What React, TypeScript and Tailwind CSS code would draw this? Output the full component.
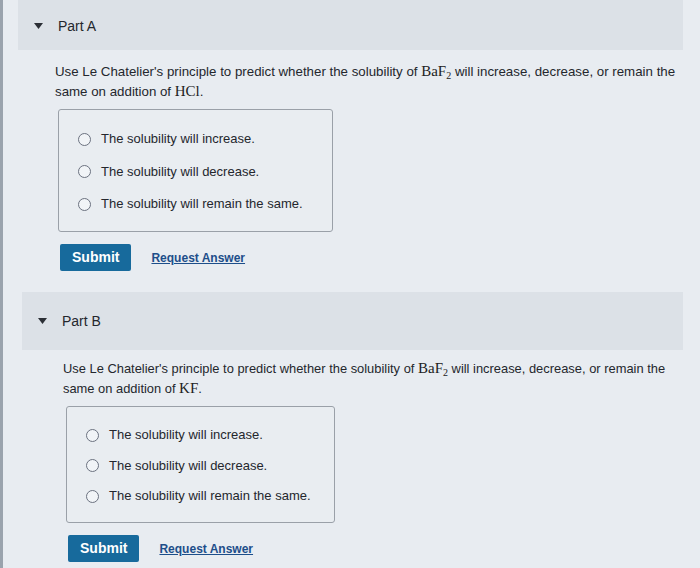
import React from "react";

const sans = { fontFamily: '"Liberation Sans", Arial, sans-serif' };

function Tri() {
  return (
    <svg width="9" height="7" viewBox="0 0 9 7" className="block">
      <path d="M0 0 L9 0 L4.5 6 Z" fill="#2b2f36" />
    </svg>
  );
}

function Radio() {
  return <span className="inline-block w-[13px] h-[13px] rounded-full border border-[#6b7280] bg-[#f1f4f7] shrink-0" />;
}

function Math({ children }: { children: React.ReactNode }) {
  return <span className="text-[15px] leading-none text-[#222]" style={{ fontFamily: '"Liberation Serif", "Times New Roman", serif' }}>{children}</span>;
}

type P = {
  label: string; chem: React.ReactNode; pl: string; ml: string; bandH: string; bandPt: string; gapTop: string;
  boxW: string; boxPad: string; gap: string; textSize: string;
};

function Part({ label, chem, pl, ml, bandH, bandPt, gapTop, boxW, boxPad, gap, textSize }: P) {
  return (
    <div className={ml}>
      <div className={`${bandH} bg-[#dce1e7] flex items-center ${bandPt}`}>
        <div className="w-[40px] flex justify-center"><Tri /></div>
        <span className="text-[14px] text-[#24272d]">{label}</span>
      </div>
      <div className={`${pl} ${gapTop}`}>
        <p className={`${textSize} leading-[20px] text-[#24272d] pr-1`}>
          Use Le Chatelier's principle to predict whether the solubility of <Math>BaF<sub className="text-[10px]">2</sub></Math> will increase, decrease, or remain the same on addition of <Math>{chem}</Math>.
        </p>
        <div className={`mt-[7px] ml-[3px] ${boxW} border border-[#9aa0a8] rounded-[3px] bg-[#e9edf1] pl-[19px] ${boxPad} flex flex-col ${gap}`}>
          {["The solubility will increase.", "The solubility will decrease.", "The solubility will remain the same."].map((t) => (
            <div key={t} className="flex items-center gap-[10px] h-[18px]">
              <Radio />
              <span className="text-[13px] text-[#24272d]">{t}</span>
            </div>
          ))}
        </div>
        <div className="mt-[12px] ml-[5px] flex items-center gap-[20px]">
          <button className="h-[27px] px-[12px] bg-[#176a9c] text-white text-[14px] font-bold rounded-[2px]" style={sans}>Submit</button>
          <span className="text-[12px] font-bold text-[#1d4e8a] underline">Request Answer</span>
        </div>
      </div>
    </div>
  );
}

export default function App() {
  return (
    <div className="w-[700px] h-[568px] overflow-hidden bg-[#e8ecf1] border-l-[3px] border-[#9aa3ad]" style={sans}>
      <div className="mr-[17px]">
        <Part label="Part A" chem="HCl" ml="ml-[15px]" pl="pl-[37px]" bandH="h-[50px]" bandPt="pt-[2px]" gapTop="pt-[12px]"
          boxW="w-[275px]" boxPad="pt-[20px] pb-[18px]" gap="gap-[14.5px]" textSize="text-[13.3px]" />
        <div className="h-[21px]" />
        <Part label="Part B" chem="KF" ml="ml-[19px]" pl="pl-[41px]" bandH="h-[58px]" bandPt="pt-[0px]" gapTop="pt-[9px]"
          boxW="w-[269px]" boxPad="pt-[19px] pb-[17px]" gap="gap-[12.5px]" textSize="text-[12.9px]" />
      </div>
    </div>
  );
}
